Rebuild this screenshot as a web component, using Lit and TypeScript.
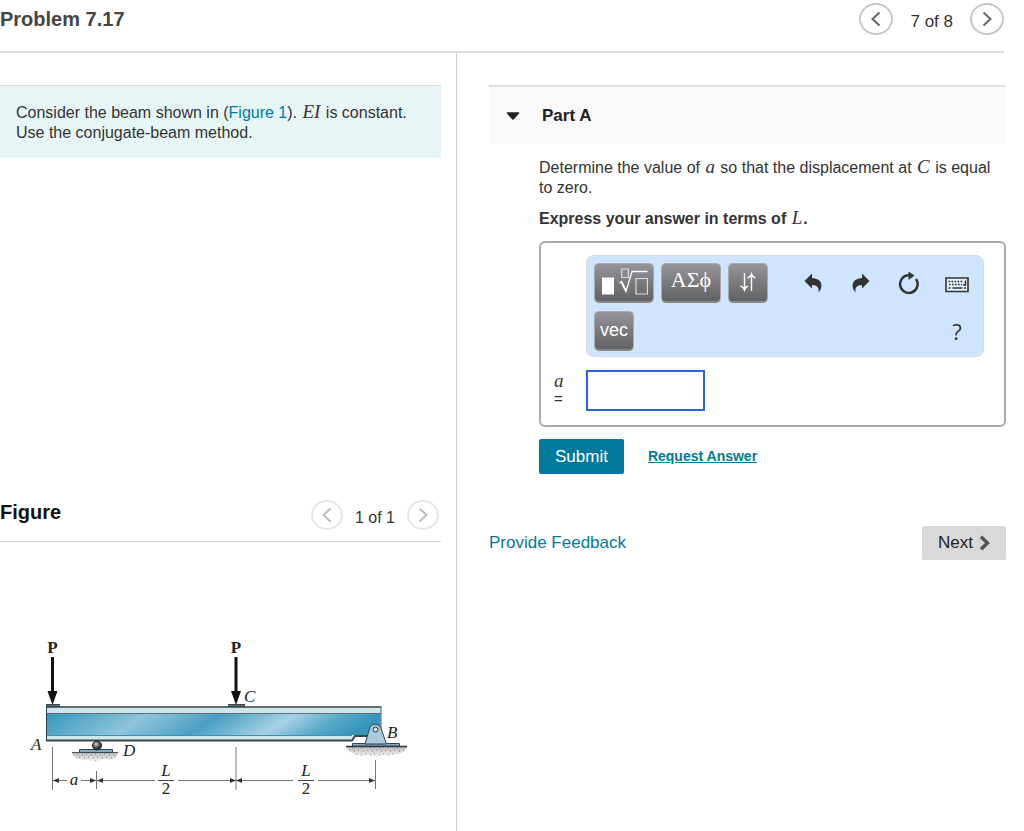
import { LitElement, html, svg, css } from "lit";
import { customElement, property } from "lit/decorators.js";

@customElement("page-stepper")
class PageStepper extends LitElement {
  @property() label = "";
  @property({ type: Boolean }) muted = false;

  static styles = css`
    :host { display: block; }
    .stepper { display: flex; align-items: center; gap: 17px; font-size: 17px; line-height: 20px; }
    .circle {
      box-sizing: border-box; width: 34px; height: 32px; padding: 0;
      display: grid; place-items: center;
      border: 2px solid #c6c6c6; border-radius: 50%; background: #fff; color: #666;
    }
    .text { padding-top: 6px; white-space: nowrap; }
    .muted { gap: 12px; font-size: 16px; }
    .muted .circle { width: 32px; height: 30px; border-color: #e6e6e6; color: #bdbdbd; }
    svg { display: block; }
  `;

  render() {
    return html`<div class="stepper ${this.muted ? "muted" : ""}">
      <button class="circle" aria-label="Previous">
        <svg width="12" height="16" viewBox="0 0 12 16" fill="none" stroke="currentColor" stroke-width="2"><path d="M9.500 1.500 2.500 8l7 6.500" /></svg>
      </button>
      <span class="text">${this.label}</span>
      <button class="circle" aria-label="Next">
        <svg width="12" height="16" viewBox="0 0 12 16" fill="none" stroke="currentColor" stroke-width="2"><path d="M2.500 1.500 9.500 8l-7 6.500" /></svg>
      </button>
    </div>`;
  }
}

@customElement("beam-figure")
class BeamFigure extends LitElement {
  static styles = css`
    :host { display: block; }
    svg { display: block; max-width: 100%; }
    .load { font: bold 17px "Liberation Serif", serif; }
    .point { font: italic 17px "Liberation Serif", serif; }
    .digit { font: 17px "Liberation Serif", serif; }
    text { fill: #222; }
    .dim { stroke: #777; stroke-width: 1; fill: none; }
    .tip { fill: #333; }
  `;

  load(x: number) {
    return svg`
      <text class="load" x=${x} y="33" text-anchor="middle">P</text>
      <path d="M${x} 37v38" stroke="#111" stroke-width="3" />
      <path d="M${x - 5} 71h10l-5 14z" fill="#111" />`;
  }

  tip(x: number, dir: number) {
    return svg`<path class="tip" d="M${x} 160.500l${dir * 6} -2.500v5z" />`;
  }

  half(x: number) {
    return svg`
      <text class="point" x=${x} y="156" text-anchor="middle">L</text>
      <path d="M${x - 8} 160.500h16" stroke="#444" />
      <text class="digit" x=${x} y="174" text-anchor="middle">2</text>`;
  }

  render() {
    return html`<svg width="420" height="190" viewBox="0 0 420 190" role="img" aria-label="Beam with two loads P">
      <defs>
        <linearGradient id="web" x1="0" y1="0" x2="1" y2="0.1">
          <stop offset="0" stop-color="#3598bb" /><stop offset=".3" stop-color="#90c4db" />
          <stop offset=".52" stop-color="#4a9fc2" /><stop offset=".74" stop-color="#a8d2e5" />
          <stop offset=".88" stop-color="#5aa9c9" /><stop offset="1" stop-color="#3595ba" />
        </linearGradient>
        <linearGradient id="soil" x1="0" y1="0" x2="0" y2="1">
          <stop offset="0" stop-color="#bebebe" /><stop offset="1" stop-color="#f4f4f4" />
        </linearGradient>
        <radialGradient id="ball" cx=".4" cy=".35">
          <stop offset="0" stop-color="#ddd" /><stop offset=".5" stop-color="#777" /><stop offset="1" stop-color="#333" />
        </radialGradient>
        <pattern id="grit" width="9" height="7" patternUnits="userSpaceOnUse">
          <path d="M1 2h1M5 1h1M3 5h1M7 4h1" stroke="#777" />
        </pattern>
      </defs>
      <path d="M46.500 87.500H381V116H357l-5 4.500H46.500z" fill="#cfe6ef" />
      <path d="M47 94H380.500V115H47z" fill="url(#web)" />
      <path d="M47 93.500H381" stroke="#56717d" />
      <path d="M47 115.500H352" stroke="#3d8fb4" />
      <path d="M46 87H381.500" stroke="#666e72" stroke-width="2" />
      <path d="M46.500 87V121" stroke="#223f4c" />
      <path d="M46 120.500H352l3-4.500h14" stroke="#384850" stroke-width="2" fill="none" />
      <path d="M381 87V117" stroke="#506873" />
      <path d="M46.500 84.500h13v2h-13zM228.500 84.500h16v2h-16z" fill="#61717a" stroke="#38454b" />
      ${this.load(52.5)} ${this.load(236)}
      <path d="M72 133h46q-2 7-9 7-5-2-11 1-7 1-12-1-11 1-14-7z" fill="url(#soil)" />
      <path d="M72 133h46q-2 7-9 7-5-2-11 1-7 1-12-1-11 1-14-7z" fill="url(#grit)" />
      <path d="M72 132.500h46" stroke="#555" />
      <path d="M79.500 129.500h33v3h-33z" fill="#82a9b8" stroke="#314854" />
      <circle cx="97" cy="125.500" r="4.500" fill="url(#ball)" stroke="#222" />
      <path d="M346 127h61q-4 8-12 7-6 3-12 1-8 3-15 0-15 3-22-8z" fill="url(#soil)" />
      <path d="M346 127h61q-4 8-12 7-6 3-12 1-8 3-15 0-15 3-22-8z" fill="url(#grit)" />
      <path d="M346 126.500h61" stroke="#333" stroke-width="1.500" />
      <path d="M352.500 123.500h47v2.500h-47z" fill="#82a9b8" stroke="#314854" />
      <path d="M365 124l5-17q5-6 10.500 0l6 17z" fill="#a9cadd" stroke="#29414d" />
      <circle cx="375.500" cy="109.500" r="2.500" fill="#cfdde3" stroke="#333" />
      <text class="point" x="31" y="130">A</text>
      <text class="point" x="123" y="136">D</text>
      <text class="point" x="244" y="82">C</text>
      <text class="point" x="387" y="118">B</text>
      <path class="dim" d="M52.500 127v43M96.500 151v18M236 127v43M375.500 140v29" />
      <path class="dim" d="M53 160.500h14M81 160.500h15M97 160.500h58M178 160.500h58M236 160.500h57M318 160.500h57" />
      ${this.tip(53, 1)} ${this.tip(96, -1)} ${this.tip(97, 1)} ${this.tip(236, -1)} ${this.tip(236, 1)} ${this.tip(375, -1)}
      <text class="point" x="74" y="165" text-anchor="middle">a</text>
      ${this.half(166)} ${this.half(306)}
    </svg>`;
  }
}

@customElement("app-root")
class AppRoot extends LitElement {
  static styles = css`
    :host {
      display: flex; flex-direction: column; min-height: 100vh;
      background: #fff; color: #333; font: 16px/20px "Liberation Sans", Arial, sans-serif;
    }
    h1, h2, p { margin: 0; }
    a { color: #007a9c; text-decoration: none; }
    button { font-family: inherit; }
    svg { display: block; }
    .top {
      display: flex; justify-content: space-between; align-items: flex-start;
      height: 48px; padding-top: 3px; margin-right: 20px; border-bottom: 2px solid #dedede;
    }
    .title { font-size: 20px; line-height: 32px; color: #444; }
    .columns { flex: 1; display: grid; grid-template-columns: 457fr 567fr; }
    .left { padding: 32px 15px 0 0; border-right: 1px solid #c3d2df; }
    .right { padding: 32px 18px 0 32px; }
    .intro { padding: 17px 16px 15px; margin-bottom: 342px; border-top: 1px solid #dcdcdc; background: #e6f6f7; }
    .math { font: italic 19px/1px "Liberation Serif", serif; margin: 0 1px; }
    .figure-bar {
      display: flex; justify-content: space-between; height: 41px; margin-bottom: 78px;
      border-bottom: 1px solid #d4d4d4; padding-right: 2px;
    }
    .figure-title { font-size: 20px; line-height: 24px; color: #111; }
    .part {
      display: flex; align-items: center; gap: 22px; height: 57px; padding-left: 17px;
      border-top: 2px solid #dedede; background: #f9f9f9; color: #222;
    }
    .part-title { font-size: 17px; }
    .body { padding: 14px 0 0 50px; }
    .question { padding-right: 12px; }
    .express { margin: 11px 0 12px; font-weight: bold; }
    .express .math { font-weight: normal; }
    .answer {
      display: grid; grid-template-columns: 33px 1fr; row-gap: 13px;
      padding: 12px 20px 14px 12px; border: 2px solid #aaa; border-radius: 6px;
    }
    .toolbar {
      grid-column: 2; display: grid; gap: 8px; padding: 7px 14px 5px 7px;
      border: 1px solid #d5d7da; border-radius: 8px; background: #cfe5ff;
    }
    .row, .tools, .actions { display: flex; align-items: center; }
    .row { justify-content: space-between; }
    .tools { gap: 7px; }
    .actions { gap: 24px; }
    .tool {
      box-sizing: border-box; width: 40px; height: 40px; padding: 0 0 2px; display: grid; place-items: center;
      border: 1px solid #aaa; border-bottom: 2px solid #888; border-radius: 5px;
      background: linear-gradient(#94949b, #626262); color: #fff; font-size: 18px; line-height: 20px;
    }
    .wide { width: 60px; }
    .greek { font-family: "Liberation Serif", serif; font-size: 22px; padding-bottom: 6px; }
    .action {
      width: 24px; height: 24px; padding: 0; display: grid; place-items: center;
      border: 0; background: none; color: #333; font: 22px/24px "Open Sans", sans-serif;
    }
    .help { padding-bottom: 6px; }
    .eq { padding-top: 2px; line-height: 18px; font-size: 15px; }
    .eq .math { line-height: 18px; display: block; }
    .eq small { font-size: 15px; margin: 0 1px; }
    .field {
      box-sizing: border-box; width: 119px; height: 41px; border: 2px solid #2b64d8;
      padding: 4px; font: 20px "Liberation Serif", serif; background: #fff; outline: none;
    }
    .send { display: flex; align-items: center; gap: 24px; margin-top: 12px; }
    .submit {
      padding: 8px 16px 7px; border: 0; border-radius: 2px; background: #007a9c;
      color: #fff; font-size: 17px; line-height: 20px;
    }
    .request { font-size: 14px; font-weight: bold; text-decoration: underline; padding-bottom: 2px; }
    .foot { display: flex; justify-content: space-between; align-items: center; margin-top: 52px; font-size: 17px; }
    .next {
      display: flex; align-items: center; gap: 6px; padding: 7px 16px; border: 0; border-radius: 2px;
      background: #d9d9d9; color: #222; font-size: 17px; line-height: 20px;
    }
  `;

  render() {
    return html`
      <header class="top">
        <h1 class="title">Problem 7.17</h1>
        <page-stepper label="7 of 8"></page-stepper>
      </header>
      <main class="columns">
        <section class="left">
          <p class="intro">
            <span>Consider the beam shown in (<a href="#figure">Figure 1</a>). <span class="math">EI</span> is constant.</span>
            <span>Use the conjugate-beam method.</span>
          </p>
          <div class="figure-bar" id="figure">
            <h2 class="figure-title">Figure</h2>
            <page-stepper label="1 of 1" muted></page-stepper>
          </div>
          <beam-figure></beam-figure>
        </section>
        <section class="right">
          <div class="part">
            <svg width="14" height="8" viewBox="0 0 14 8"><path d="M.5 1q0-.7 1-.7h11q1 0 1 .7L7.700 7.500q-.7.600-1.400 0z" fill="#222" /></svg>
            <h2 class="part-title">Part A</h2>
          </div>
          <div class="body">
            <p class="question">Determine the value of <span class="math">a</span> so that the displacement at <span class="math">C</span> is equal to zero.</p>
            <p class="express">Express your answer in terms of <span class="math">L</span>.</p>
            <div class="answer">
              <div class="toolbar">
                <div class="row">
                  <div class="tools">
                    <button class="tool wide" aria-label="Templates">
                      <svg width="48" height="30" viewBox="0 0 48 30" fill="none">
                        <path d="M2 10.500h12v17H2z" fill="#fff" />
                        <path d="M21.700 2h6.600v8.500h-6.600zM36 11.500h11.500v15.500H36z" stroke="#ddd" stroke-width="1.200" />
                        <path d="M19.500 16l2-1.500 4.500 10L32 4.500h15.500" stroke="#fff" stroke-width="1.300" />
                        <path d="M21.500 15l4.500 9" stroke="#fff" stroke-width="2" />
                      </svg>
                    </button>
                    <button class="tool wide greek">ΑΣϕ</button>
                    <button class="tool" aria-label="Arrows">
                      <svg width="18" height="22" viewBox="0 0 18 22" fill="none" stroke="#fff" stroke-width="1.400">
                        <path d="M5.500 2v17M1.500 15q3 1 4 4 1-3 3.500-4M12.500 20V3M8.500 7q3-1 4-4 1 3 4 4" />
                      </svg>
                    </button>
                  </div>
                  <div class="actions">
                    <button class="action" aria-label="Undo">
                      <svg width="18" height="20" viewBox="0 0 18 20"><path d="M.5 8 8 .5V5q9.500.500 9.500 8 0 3.500-3 6.500 1.500-7.500-6.500-7.500v3.500z" fill="#333" /></svg>
                    </button>
                    <button class="action" aria-label="Redo">
                      <svg width="18" height="20" viewBox="0 0 18 20"><path d="M17.500 8 10 .5V5Q.5 5.500.5 13q0 3.500 3 6.500Q2 12 10 12v3.500z" fill="#333" /></svg>
                    </button>
                    <button class="action" aria-label="Reset">
                      <svg width="22" height="24" viewBox="0 0 22 24"><path d="M11.500 4.300A8.800 8.800 0 1 0 18 8" fill="none" stroke="#333" stroke-width="2.500" /><path d="M10.500.5 16.500 4.500l-6 4.500z" fill="#333" /></svg>
                    </button>
                    <button class="action" aria-label="Keyboard">
                      <svg width="24" height="20" viewBox="0 0 24 20"><path d="M1 5h22v13.500H1z" fill="#e4f0ff" stroke="#333" stroke-width="1.600" /><path d="M3.500 8.500h15M4 11.500h13" stroke="#333" stroke-width="1.600" stroke-dasharray="1.700 1.300" /><path d="M3.500 15h2M7.500 15h10M19 15h2M20.500 7.500v4.500H18" stroke="#333" stroke-width="1.500" fill="none" /></svg>
                    </button>
                  </div>
                </div>
                <div class="row">
                  <button class="tool">vec</button>
                  <button class="action help" aria-label="Help">?</button>
                </div>
              </div>
              <label class="eq" for="value"><span class="math">a</span><small>=</small></label>
              <input class="field" id="value" type="text" />
            </div>
            <div class="send">
              <button class="submit">Submit</button>
              <a class="request" href="#request">Request Answer</a>
            </div>
          </div>
          <div class="foot">
            <a href="#feedback">Provide Feedback</a>
            <button class="next">Next
              <svg width="11" height="16" viewBox="0 0 11 16" fill="none"><path d="M2 1.800 8.500 8 2 14.200" stroke="#555" stroke-width="3.600" /></svg>
            </button>
          </div>
        </section>
      </main>
    `;
  }
}
